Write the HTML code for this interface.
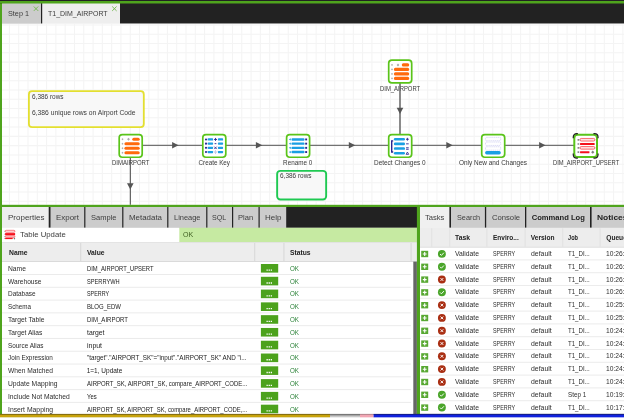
<!DOCTYPE html>
<html lang="en">
<head>
<meta charset="utf-8">
<title>T1_DIM_AIRPORT</title>
<style>
html,body{margin:0;padding:0;background:#fff}
#app{position:relative;width:624px;height:418px;overflow:hidden;background:#fff;font-family:"Liberation Sans",sans-serif}
#app svg,#app .tl{position:absolute;left:0;top:0;display:block}
#app .tl{width:624px;height:418px;will-change:transform}
#app span{position:absolute;white-space:pre;line-height:12px;transform-origin:0 50%}
</style>
</head>
<body>
<div id="app">
<svg width="624" height="418" viewBox="0 0 624 418">
<rect x="0.00" y="0.00" width="624.00" height="418.00" fill="#ffffff"/>
<rect x="0.00" y="0.00" width="624.00" height="23.70" fill="#222222"/>
<rect x="2.00" y="3.00" width="39.00" height="21.20" fill="#cccccc"/>
<rect x="42.20" y="3.00" width="77.80" height="21.20" fill="#eeeeee"/>
<rect x="0.00" y="23.70" width="624.00" height="2.00" fill="#ffffff"/>
<rect x="0.00" y="1.00" width="624.00" height="2.50" fill="#4fa41d"/>
<rect x="0.00" y="0.00" width="624.00" height="1.00" fill="#222222"/>
<path d="M33.8 6.5l4.4 4.4M38.2 6.5l-4.4 4.4" stroke="#6fb74a" stroke-width="0.9" fill="none"/>
<path d="M112.2 6.5l4.4 4.4M116.6 6.5l-4.4 4.4" stroke="#6fb74a" stroke-width="0.9" fill="none"/>
<path d="M9.40 24V204.8M18.70 24V204.8M27.99 24V204.8M37.29 24V204.8M46.58 24V204.8M55.88 24V204.8M65.17 24V204.8M74.47 24V204.8M83.76 24V204.8M93.06 24V204.8M102.35 24V204.8M111.65 24V204.8M120.94 24V204.8M130.24 24V204.8M139.53 24V204.8M148.82 24V204.8M158.12 24V204.8M167.41 24V204.8M176.71 24V204.8M186.00 24V204.8M195.30 24V204.8M204.59 24V204.8M213.89 24V204.8M223.18 24V204.8M232.48 24V204.8M241.77 24V204.8M251.07 24V204.8M260.36 24V204.8M269.66 24V204.8M278.95 24V204.8M288.25 24V204.8M297.54 24V204.8M306.84 24V204.8M316.13 24V204.8M325.43 24V204.8M334.72 24V204.8M344.02 24V204.8M353.31 24V204.8M362.61 24V204.8M371.91 24V204.8M381.20 24V204.8M390.50 24V204.8M399.79 24V204.8M409.09 24V204.8M418.38 24V204.8M427.68 24V204.8M436.97 24V204.8M446.27 24V204.8M455.56 24V204.8M464.86 24V204.8M474.15 24V204.8M483.45 24V204.8M492.74 24V204.8M502.04 24V204.8M511.33 24V204.8M520.63 24V204.8M529.92 24V204.8M539.22 24V204.8M548.51 24V204.8M557.81 24V204.8M567.10 24V204.8M576.39 24V204.8M585.69 24V204.8M594.98 24V204.8M604.28 24V204.8M613.57 24V204.8M622.87 24V204.8M2 25.00H624M2 34.28H624M2 43.56H624M2 52.84H624M2 62.12H624M2 71.40H624M2 80.68H624M2 89.96H624M2 99.24H624M2 108.52H624M2 117.80H624M2 127.08H624M2 136.36H624M2 145.64H624M2 154.92H624M2 164.20H624M2 173.48H624M2 182.76H624M2 192.04H624M2 201.32H624" stroke="#f4f4f4" stroke-width="1.05" fill="none"/>
<rect x="28.9" y="91.2" width="114.9" height="35.9" rx="3.2" fill="#f8f8f8" stroke="#e3df30" stroke-width="1.8"/>
<rect x="277.15" y="170.85" width="49.0" height="28.7" rx="3.2" fill="#f8f8f8" stroke="#1fc952" stroke-width="1.9"/>
<path d="M143 145.30H574" stroke="#484848" stroke-width="0.95" fill="none"/>
<path d="M172.1 142.00L178.5 145.30L172.1 148.60Z" fill="#555555"/>
<path d="M255.9 142.00L262.3 145.30L255.9 148.60Z" fill="#555555"/>
<path d="M348.8 142.00L355.2 145.30L348.8 148.60Z" fill="#555555"/>
<path d="M446.3 142.00L452.7 145.30L446.3 148.60Z" fill="#555555"/>
<path d="M539.1 142.00L545.5 145.30L539.1 148.60Z" fill="#555555"/>
</svg>
<div class="tl">
<span style="left:7.9px;top:8.00px;font-size:7.6px;color:#3c3c3c;transform:scaleX(0.9559);">Step 1</span>
<span style="left:48.2px;top:8.00px;font-size:7.6px;color:#3c3c3c;transform:scaleX(0.9191);">T1_DIM_AIRPORT</span>
<span style="left:31.6px;top:91.00px;font-size:6.3px;color:#3a3a3a;transform:scaleX(1.0256);">6,386 rows</span>
<span style="left:31.6px;top:107.00px;font-size:6.3px;color:#3a3a3a;transform:scaleX(1.0684);">6,386 unique rows on Airport Code</span>
<span style="left:279.8px;top:170.00px;font-size:6.3px;color:#3a3a3a;transform:scaleX(1.0256);">6,386 rows</span>
<span style="left:111.9px;top:157.00px;font-size:6.3px;color:#3a3a3a;transform:scaleX(0.9512);">DIMAIRPORT</span>
<span style="left:198.5px;top:157.00px;font-size:6.3px;color:#3a3a3a;">Create Key</span>
<span style="left:283.1px;top:157.00px;font-size:6.3px;color:#3a3a3a;">Rename 0</span>
<span style="left:374.0px;top:157.00px;font-size:6.3px;color:#3a3a3a;transform:scaleX(1.0237);">Detect Changes 0</span>
<span style="left:458.5px;top:157.00px;font-size:6.3px;color:#3a3a3a;transform:scaleX(1.0223);">Only New and Changes</span>
<span style="left:552.5px;top:157.00px;font-size:6.3px;color:#3a3a3a;transform:scaleX(0.9212);">DIM_AIRPORT_UPSERT</span>
<span style="left:379.8px;top:83.00px;font-size:6.3px;color:#3a3a3a;transform:scaleX(0.9366);">DIM_AIRPORT</span>
</div>
<svg width="624" height="418" viewBox="0 0 624 418">
<path d="M400 83V134" stroke="#666" stroke-width="1.5" fill="none"/><path d="M130.3 157V204.80" stroke="#444" stroke-width="1" fill="none"/>
<path d="M396.7 107.80L403.3 107.80L400.0 114.00Z" fill="#555555"/>
<path d="M127.0 183.30L133.6 183.30L130.3 189.50Z" fill="#555555"/>
<g transform="translate(118.50 133.85)"><rect x="0.7" y="0.7" width="23.0" height="22.7" rx="3.2" fill="#fff" stroke="#5ac41a" stroke-width="1.7"/><rect x="13.8" y="3.8" width="7.4" height="3.2" rx="1.5" fill="#ff6a0d"/><rect x="5.9" y="8.3" width="15.3" height="3.2" rx="1.5" fill="#ff6a0d"/><rect x="5.9" y="12.8" width="15.3" height="3.2" rx="1.5" fill="#ff6a0d"/><rect x="5.9" y="17.3" width="15.3" height="3.2" rx="1.5" fill="#ff6a0d"/><path d="M3.10 5.40h1.80M4.00 4.50v1.80" stroke="#999" stroke-width="0.6" fill="none"/><path d="M3.10 9.90h1.80M4.00 9.00v1.80" stroke="#999" stroke-width="0.6" fill="none"/><path d="M3.10 14.40h1.80M4.00 13.50v1.80" stroke="#999" stroke-width="0.6" fill="none"/><path d="M3.10 18.90h1.80M4.00 18.00v1.80" stroke="#999" stroke-width="0.6" fill="none"/><path d="M10 3.9l1.4 1.5l-1.4 1.5l-1.4 -1.5z" fill="#aaa"/></g>
<g transform="translate(202.10 133.85)"><rect x="0.7" y="0.7" width="23.0" height="22.7" rx="3.2" fill="#fff" stroke="#5ac41a" stroke-width="1.7"/><circle cx="3.9" cy="5.6" r="1.05" fill="#2b2391"/><rect x="5.5" y="4.449999999999999" width="5.5" height="2.3" rx="0.7" fill="#1a9fe3"/><rect x="15.8" y="4.449999999999999" width="5.2" height="2.3" rx="0.7" fill="#1a9fe3"/><circle cx="3.9" cy="9.8" r="1.05" fill="#2b2391"/><rect x="5.5" y="8.65" width="5.5" height="2.3" rx="0.7" fill="#1a9fe3"/><rect x="15.8" y="8.65" width="5.2" height="2.3" rx="0.7" fill="#1a9fe3"/><circle cx="3.9" cy="14.0" r="1.05" fill="#2b2391"/><rect x="5.5" y="12.85" width="5.5" height="2.3" rx="0.7" fill="#1a9fe3"/><rect x="15.8" y="12.85" width="5.2" height="2.3" rx="0.7" fill="#1a9fe3"/><circle cx="3.9" cy="18.2" r="1.05" fill="#2b2391"/><rect x="5.5" y="17.05" width="5.5" height="2.3" rx="0.7" fill="#1a9fe3"/><rect x="15.8" y="17.05" width="5.2" height="2.3" rx="0.7" fill="#1a9fe3"/><path d="M11.9 5.6h3M13.4 4.1v3 M12.5 9.8h1.8 M12.2 12.8l2.4 2.4M14.6 12.8l-2.4 2.4" stroke="#2b2391" stroke-width="0.9" fill="none"/><path d="M12.2 18.2h2.4M13.4 16.7v0.6M13.4 19.1v0.6" stroke="#8a86c8" stroke-width="0.8" fill="none"/></g>
<g transform="translate(285.90 133.85)"><rect x="0.7" y="0.7" width="23.0" height="22.7" rx="3.2" fill="#fff" stroke="#5ac41a" stroke-width="1.7"/><path d="M2.9 5.6l2 -1.1v2.2z" fill="#1a9fe3"/><rect x="5.6" y="4.3999999999999995" width="13" height="2.4" rx="0.9" fill="#1a9fe3"/><rect x="19.3" y="4.6499999999999995" width="1.9" height="1.9" fill="#2b2391"/><path d="M2.9 9.8l2 -1.1v2.2z" fill="#1a9fe3"/><rect x="5.6" y="8.600000000000001" width="13" height="2.4" rx="0.9" fill="#1a9fe3"/><rect x="19.3" y="8.850000000000001" width="1.9" height="1.9" fill="#2b2391"/><path d="M2.9 14.0l2 -1.1v2.2z" fill="#1a9fe3"/><rect x="5.6" y="12.8" width="13" height="2.4" rx="0.9" fill="#1a9fe3"/><rect x="19.3" y="13.05" width="1.9" height="1.9" fill="#2b2391"/><path d="M2.9 18.2l2 -1.1v2.2z" fill="#1a9fe3"/><rect x="5.6" y="17.0" width="13" height="2.4" rx="0.9" fill="#1a9fe3"/><rect x="19.3" y="17.25" width="1.9" height="1.9" fill="#2b2391"/></g>
<g transform="translate(388.00 133.85)"><rect x="0.7" y="0.7" width="23.0" height="22.7" rx="3.2" fill="#fff" stroke="#5ac41a" stroke-width="1.7"/><rect x="5.9" y="4.1000000000000005" width="11.1" height="2.6" rx="1.2" fill="#1a9fe3"/><rect x="5.9" y="8.7" width="11.1" height="2.6" rx="1.2" fill="#1a9fe3"/><rect x="5.9" y="13.399999999999999" width="11.1" height="2.6" rx="1.2" fill="#1a9fe3"/><rect x="5.9" y="18.099999999999998" width="11.1" height="2.6" rx="1.2" fill="#1a9fe3"/><path d="M5.2 7H3.7V18.2H5.2" stroke="#2b2391" stroke-width="1.4" fill="none"/><path d="M18 5.4h2.8M19.4 4v2.8 M18.1 10h2.6 M18.1 13.9h2.6M18.1 15.4h2.6" stroke="#2b2391" stroke-width="0.9" fill="none"/><path d="M19.4 18.2l1.3 2.3h-2.6z" stroke="#2b2391" stroke-width="0.8" fill="none"/></g>
<g transform="translate(481.00 133.85)"><rect x="0.7" y="0.7" width="23.0" height="22.7" rx="3.2" fill="#fff" stroke="#5ac41a" stroke-width="1.7"/><rect x="4.5" y="3.5" width="15.2" height="3.4" rx="1" fill="#fff" stroke="#c4c4ee" stroke-width="0.6" stroke-dasharray="1.3 0.6"/><rect x="4.5" y="8.2" width="15.2" height="3.4" rx="1" fill="#fff" stroke="#c4c4ee" stroke-width="0.6" stroke-dasharray="1.3 0.6"/><rect x="4.5" y="12.9" width="15.2" height="3.4" rx="1" fill="#fff" stroke="#c4c4ee" stroke-width="0.6" stroke-dasharray="1.3 0.6"/><rect x="4.1" y="17.2" width="15.7" height="3.4" rx="1.6" fill="#1a9fe3"/></g>
<g transform="translate(573.45 133.85)"><rect x="0.85" y="0.85" width="22.7" height="22.4" rx="3.2" fill="#fff" stroke="#5ac41a" stroke-width="2"/><path d="M-0.2 4.3999999999999995V3.4Q-0.2 -0.2 3.4 -0.2H4.3999999999999995 M20.0 -0.2H21.0Q24.6 -0.2 24.6 3.4V4.3999999999999995 M24.6 19.700000000000003V20.7Q24.6 24.3 21.0 24.3H20.0 M4.3999999999999995 24.3H3.4Q-0.2 24.3 -0.2 20.7V19.700000000000003" stroke="#222" stroke-width="1.2" fill="none"/><rect x="6.5" y="4.6" width="15" height="2.6" rx="1.3" fill="#ffe0e0" stroke="#f5101c" stroke-width="0.6"/><rect x="6.6" y="9.1" width="14.6" height="2.1" rx="0.4" fill="#f5101c"/><rect x="6.5" y="12.7" width="15" height="2.6" rx="1.3" fill="#ffe0e0" stroke="#f5101c" stroke-width="0.6"/><rect x="6.6" y="17.3" width="9.4" height="2.1" rx="0.4" fill="#f5101c"/><path d="M4.1 5.1h1.7v1.7h-1.7zM4.1 9.3h1.7v1.7h-1.7zM4.1 13.2h1.7v1.7h-1.7zM4.1 17.5h1.7v1.7h-1.7z" fill="#888"/><path d="M19.3 16.7l1.6 1.6l-1.6 1.6l-1.6 -1.6z" fill="#808080"/></g>
<g transform="translate(388.00 59.50)"><rect x="0.7" y="0.7" width="23.0" height="22.7" rx="3.2" fill="#fff" stroke="#5ac41a" stroke-width="1.7"/><rect x="13.8" y="3.8" width="7.4" height="3.2" rx="1.5" fill="#ff6a0d"/><rect x="5.9" y="8.3" width="15.3" height="3.2" rx="1.5" fill="#ff6a0d"/><rect x="5.9" y="12.8" width="15.3" height="3.2" rx="1.5" fill="#ff6a0d"/><rect x="5.9" y="17.3" width="15.3" height="3.2" rx="1.5" fill="#ff6a0d"/><path d="M3.10 5.40h1.80M4.00 4.50v1.80" stroke="#999" stroke-width="0.6" fill="none"/><path d="M3.10 9.90h1.80M4.00 9.00v1.80" stroke="#999" stroke-width="0.6" fill="none"/><path d="M3.10 14.40h1.80M4.00 13.50v1.80" stroke="#999" stroke-width="0.6" fill="none"/><path d="M3.10 18.90h1.80M4.00 18.00v1.80" stroke="#999" stroke-width="0.6" fill="none"/><path d="M10 3.9l1.4 1.5l-1.4 1.5l-1.4 -1.5z" fill="#aaa"/></g>
<rect x="0.00" y="3.50" width="2.00" height="410.60" fill="#4fa41d"/>
<rect x="2.00" y="206.50" width="622.00" height="21.30" fill="#222222"/>
<rect x="2.00" y="206.50" width="46.70" height="21.80" fill="#eeeeee"/>
<rect x="50.50" y="206.50" width="33.70" height="21.80" fill="#cccccc"/>
<rect x="85.40" y="206.50" width="36.80" height="21.80" fill="#cccccc"/>
<rect x="123.40" y="206.50" width="43.80" height="21.80" fill="#cccccc"/>
<rect x="168.40" y="206.50" width="37.80" height="21.80" fill="#cccccc"/>
<rect x="207.40" y="206.50" width="24.60" height="21.80" fill="#cccccc"/>
<rect x="233.20" y="206.50" width="25.30" height="21.80" fill="#cccccc"/>
<rect x="259.70" y="206.50" width="26.50" height="21.80" fill="#cccccc"/>
<rect x="2.00" y="227.80" width="177.30" height="14.60" fill="#ffffff"/>
<rect x="179.30" y="227.80" width="237.60" height="14.60" fill="#c6eaa2"/>
<g transform="translate(3.8 229.8)"><rect x="1.5" y="0.5" width="9.6" height="2" rx="0.9" fill="#ffe4e4" stroke="#f5101c" stroke-width="0.5"/><rect x="1.3" y="3.3" width="10" height="2.2" fill="#f5101c"/><rect x="1.5" y="6.1" width="9.6" height="1.5" rx="0.7" fill="#ffe4e4" stroke="#f5101c" stroke-width="0.5"/><rect x="1.3" y="8.1" width="7.6" height="1.2" fill="#f5101c"/><path d="M0.2 1.5h0.8M0.2 4.4h0.8M0.2 6.9h0.8M0.2 8.7h0.8" stroke="#999" stroke-width="0.8" fill="none"/><circle cx="10.6" cy="8.8" r="0.8" fill="#777"/></g>
<rect x="2.00" y="242.40" width="414.90" height="19.20" fill="#ededed"/>
<rect x="2.00" y="242.00" width="414.90" height="0.80" fill="#e0e0e0"/>
<rect x="2.00" y="261.10" width="414.90" height="1.00" fill="#d8d8d8"/>
<rect x="80.30" y="242.90" width="0.90" height="18.20" fill="#d4d4d4"/>
<rect x="254.30" y="242.90" width="0.90" height="18.20" fill="#d4d4d4"/>
<rect x="283.50" y="242.90" width="0.90" height="18.20" fill="#d4d4d4"/>
<rect x="410.60" y="242.90" width="0.90" height="18.20" fill="#d4d4d4"/>
<rect x="2.00" y="262.10" width="411.40" height="152.00" fill="#ffffff"/>
<rect x="413.30" y="261.60" width="3.60" height="152.50" fill="#666666"/>
<rect x="260.90" y="264.00" width="17.30" height="8.60" fill="#4ca21c"/>
<path d="M266.5 270.20h1.3M268.6 270.20h1.3M270.7 270.20h1.3" stroke="#fff" stroke-width="1.3" fill="none"/>
<rect x="2.00" y="274.00" width="409.00" height="1.00" fill="#ebebeb"/>
<rect x="260.90" y="276.79" width="17.30" height="8.60" fill="#4ca21c"/>
<path d="M266.5 282.99h1.3M268.6 282.99h1.3M270.7 282.99h1.3" stroke="#fff" stroke-width="1.3" fill="none"/>
<rect x="2.00" y="286.79" width="409.00" height="1.00" fill="#ebebeb"/>
<rect x="260.90" y="289.58" width="17.30" height="8.60" fill="#4ca21c"/>
<path d="M266.5 295.78h1.3M268.6 295.78h1.3M270.7 295.78h1.3" stroke="#fff" stroke-width="1.3" fill="none"/>
<rect x="2.00" y="299.58" width="409.00" height="1.00" fill="#ebebeb"/>
<rect x="260.90" y="302.37" width="17.30" height="8.60" fill="#4ca21c"/>
<path d="M266.5 308.57h1.3M268.6 308.57h1.3M270.7 308.57h1.3" stroke="#fff" stroke-width="1.3" fill="none"/>
<rect x="2.00" y="312.37" width="409.00" height="1.00" fill="#ebebeb"/>
<rect x="260.90" y="315.16" width="17.30" height="8.60" fill="#4ca21c"/>
<path d="M266.5 321.36h1.3M268.6 321.36h1.3M270.7 321.36h1.3" stroke="#fff" stroke-width="1.3" fill="none"/>
<rect x="2.00" y="325.16" width="409.00" height="1.00" fill="#ebebeb"/>
<rect x="260.90" y="327.95" width="17.30" height="8.60" fill="#4ca21c"/>
<path d="M266.5 334.15h1.3M268.6 334.15h1.3M270.7 334.15h1.3" stroke="#fff" stroke-width="1.3" fill="none"/>
<rect x="2.00" y="337.95" width="409.00" height="1.00" fill="#ebebeb"/>
<rect x="260.90" y="340.74" width="17.30" height="8.60" fill="#4ca21c"/>
<path d="M266.5 346.94h1.3M268.6 346.94h1.3M270.7 346.94h1.3" stroke="#fff" stroke-width="1.3" fill="none"/>
<rect x="2.00" y="350.74" width="409.00" height="1.00" fill="#ebebeb"/>
<rect x="260.90" y="353.53" width="17.30" height="8.60" fill="#4ca21c"/>
<path d="M266.5 359.73h1.3M268.6 359.73h1.3M270.7 359.73h1.3" stroke="#fff" stroke-width="1.3" fill="none"/>
<rect x="2.00" y="363.53" width="409.00" height="1.00" fill="#ebebeb"/>
<rect x="260.90" y="366.32" width="17.30" height="8.60" fill="#4ca21c"/>
<path d="M266.5 372.52h1.3M268.6 372.52h1.3M270.7 372.52h1.3" stroke="#fff" stroke-width="1.3" fill="none"/>
<rect x="2.00" y="376.32" width="409.00" height="1.00" fill="#ebebeb"/>
<rect x="260.90" y="379.11" width="17.30" height="8.60" fill="#4ca21c"/>
<path d="M266.5 385.31h1.3M268.6 385.31h1.3M270.7 385.31h1.3" stroke="#fff" stroke-width="1.3" fill="none"/>
<rect x="2.00" y="389.11" width="409.00" height="1.00" fill="#ebebeb"/>
<rect x="260.90" y="391.90" width="17.30" height="8.60" fill="#4ca21c"/>
<path d="M266.5 398.10h1.3M268.6 398.10h1.3M270.7 398.10h1.3" stroke="#fff" stroke-width="1.3" fill="none"/>
<rect x="2.00" y="401.90" width="409.00" height="1.00" fill="#ebebeb"/>
<rect x="260.90" y="404.69" width="17.30" height="8.60" fill="#4ca21c"/>
<path d="M266.5 410.89h1.3M268.6 410.89h1.3M270.7 410.89h1.3" stroke="#fff" stroke-width="1.3" fill="none"/>
<rect x="416.90" y="206.70" width="3.10" height="207.40" fill="#4fa41d"/>
<rect x="420.00" y="206.50" width="29.40" height="21.80" fill="#f0f0f0"/>
<rect x="451.00" y="206.50" width="33.90" height="21.80" fill="#cccccc"/>
<rect x="486.20" y="206.50" width="38.80" height="21.80" fill="#cccccc"/>
<rect x="526.30" y="206.50" width="63.70" height="21.80" fill="#cccccc"/>
<rect x="591.60" y="206.50" width="32.40" height="21.80" fill="#cccccc"/>
<rect x="420.00" y="227.80" width="204.00" height="19.50" fill="#ededed"/>
<rect x="420.00" y="246.80" width="204.00" height="1.00" fill="#dcdcdc"/>
<rect x="431.40" y="228.30" width="0.80" height="18.50" fill="#dedede"/>
<rect x="449.40" y="228.30" width="0.80" height="18.50" fill="#dedede"/>
<rect x="486.50" y="228.30" width="0.80" height="18.50" fill="#dedede"/>
<rect x="524.70" y="228.30" width="0.80" height="18.50" fill="#dedede"/>
<rect x="562.40" y="228.30" width="0.80" height="18.50" fill="#dedede"/>
<rect x="599.70" y="228.30" width="0.80" height="18.50" fill="#dedede"/>
<rect x="420.00" y="247.80" width="204.00" height="166.30" fill="#ffffff"/>
<rect x="420.00" y="259.40" width="204.00" height="1.00" fill="#ececec"/>
<g transform="translate(421.2 250.80)"><rect width="7" height="6.4" fill="#58a832"/><path d="M1.6 3.2h3.8M3.5 1.2v4" stroke="#fff" stroke-width="1.1" fill="none"/></g>
<g transform="translate(437.7 249.70)"><circle cx="4.2" cy="4.2" r="3.95" fill="#4aa52a"/><path d="M2.3 4.3l1.4 1.4l2.5 -2.7" stroke="#fff" stroke-width="0.95" fill="none"/></g>
<rect x="420.00" y="272.20" width="204.00" height="1.00" fill="#ececec"/>
<g transform="translate(421.2 263.60)"><rect width="7" height="6.4" fill="#58a832"/><path d="M1.6 3.2h3.8M3.5 1.2v4" stroke="#fff" stroke-width="1.1" fill="none"/></g>
<g transform="translate(437.7 262.50)"><circle cx="4.2" cy="4.2" r="3.95" fill="#4aa52a"/><path d="M2.3 4.3l1.4 1.4l2.5 -2.7" stroke="#fff" stroke-width="0.95" fill="none"/></g>
<rect x="420.00" y="285.00" width="204.00" height="1.00" fill="#ececec"/>
<g transform="translate(421.2 276.40)"><rect width="7" height="6.4" fill="#58a832"/><path d="M1.6 3.2h3.8M3.5 1.2v4" stroke="#fff" stroke-width="1.1" fill="none"/></g>
<g transform="translate(437.7 275.30)"><circle cx="4.2" cy="4.2" r="3.95" fill="#a92e12"/><path d="M2.8 2.8l2.8 2.8M5.6 2.8l-2.8 2.8" stroke="#fff" stroke-width="0.95" fill="none"/></g>
<rect x="420.00" y="297.80" width="204.00" height="1.00" fill="#ececec"/>
<g transform="translate(421.2 289.20)"><rect width="7" height="6.4" fill="#58a832"/><path d="M1.6 3.2h3.8M3.5 1.2v4" stroke="#fff" stroke-width="1.1" fill="none"/></g>
<g transform="translate(437.7 288.10)"><circle cx="4.2" cy="4.2" r="3.95" fill="#4aa52a"/><path d="M2.3 4.3l1.4 1.4l2.5 -2.7" stroke="#fff" stroke-width="0.95" fill="none"/></g>
<rect x="420.00" y="310.60" width="204.00" height="1.00" fill="#ececec"/>
<g transform="translate(421.2 302.00)"><rect width="7" height="6.4" fill="#58a832"/><path d="M1.6 3.2h3.8M3.5 1.2v4" stroke="#fff" stroke-width="1.1" fill="none"/></g>
<g transform="translate(437.7 300.90)"><circle cx="4.2" cy="4.2" r="3.95" fill="#a92e12"/><path d="M2.8 2.8l2.8 2.8M5.6 2.8l-2.8 2.8" stroke="#fff" stroke-width="0.95" fill="none"/></g>
<rect x="420.00" y="323.40" width="204.00" height="1.00" fill="#ececec"/>
<g transform="translate(421.2 314.80)"><rect width="7" height="6.4" fill="#58a832"/><path d="M1.6 3.2h3.8M3.5 1.2v4" stroke="#fff" stroke-width="1.1" fill="none"/></g>
<g transform="translate(437.7 313.70)"><circle cx="4.2" cy="4.2" r="3.95" fill="#a92e12"/><path d="M2.8 2.8l2.8 2.8M5.6 2.8l-2.8 2.8" stroke="#fff" stroke-width="0.95" fill="none"/></g>
<rect x="420.00" y="336.20" width="204.00" height="1.00" fill="#ececec"/>
<g transform="translate(421.2 327.60)"><rect width="7" height="6.4" fill="#58a832"/><path d="M1.6 3.2h3.8M3.5 1.2v4" stroke="#fff" stroke-width="1.1" fill="none"/></g>
<g transform="translate(437.7 326.50)"><circle cx="4.2" cy="4.2" r="3.95" fill="#a92e12"/><path d="M2.8 2.8l2.8 2.8M5.6 2.8l-2.8 2.8" stroke="#fff" stroke-width="0.95" fill="none"/></g>
<rect x="420.00" y="349.00" width="204.00" height="1.00" fill="#ececec"/>
<g transform="translate(421.2 340.40)"><rect width="7" height="6.4" fill="#58a832"/><path d="M1.6 3.2h3.8M3.5 1.2v4" stroke="#fff" stroke-width="1.1" fill="none"/></g>
<g transform="translate(437.7 339.30)"><circle cx="4.2" cy="4.2" r="3.95" fill="#a92e12"/><path d="M2.8 2.8l2.8 2.8M5.6 2.8l-2.8 2.8" stroke="#fff" stroke-width="0.95" fill="none"/></g>
<rect x="420.00" y="361.80" width="204.00" height="1.00" fill="#ececec"/>
<g transform="translate(421.2 353.20)"><rect width="7" height="6.4" fill="#58a832"/><path d="M1.6 3.2h3.8M3.5 1.2v4" stroke="#fff" stroke-width="1.1" fill="none"/></g>
<g transform="translate(437.7 352.10)"><circle cx="4.2" cy="4.2" r="3.95" fill="#a92e12"/><path d="M2.8 2.8l2.8 2.8M5.6 2.8l-2.8 2.8" stroke="#fff" stroke-width="0.95" fill="none"/></g>
<rect x="420.00" y="374.60" width="204.00" height="1.00" fill="#ececec"/>
<g transform="translate(421.2 366.00)"><rect width="7" height="6.4" fill="#58a832"/><path d="M1.6 3.2h3.8M3.5 1.2v4" stroke="#fff" stroke-width="1.1" fill="none"/></g>
<g transform="translate(437.7 364.90)"><circle cx="4.2" cy="4.2" r="3.95" fill="#a92e12"/><path d="M2.8 2.8l2.8 2.8M5.6 2.8l-2.8 2.8" stroke="#fff" stroke-width="0.95" fill="none"/></g>
<rect x="420.00" y="387.40" width="204.00" height="1.00" fill="#ececec"/>
<g transform="translate(421.2 378.80)"><rect width="7" height="6.4" fill="#58a832"/><path d="M1.6 3.2h3.8M3.5 1.2v4" stroke="#fff" stroke-width="1.1" fill="none"/></g>
<g transform="translate(437.7 377.70)"><circle cx="4.2" cy="4.2" r="3.95" fill="#a92e12"/><path d="M2.8 2.8l2.8 2.8M5.6 2.8l-2.8 2.8" stroke="#fff" stroke-width="0.95" fill="none"/></g>
<rect x="420.00" y="400.20" width="204.00" height="1.00" fill="#ececec"/>
<g transform="translate(421.2 391.60)"><rect width="7" height="6.4" fill="#58a832"/><path d="M1.6 3.2h3.8M3.5 1.2v4" stroke="#fff" stroke-width="1.1" fill="none"/></g>
<g transform="translate(437.7 390.50)"><circle cx="4.2" cy="4.2" r="3.95" fill="#4aa52a"/><path d="M2.3 4.3l1.4 1.4l2.5 -2.7" stroke="#fff" stroke-width="0.95" fill="none"/></g>
<rect x="420.00" y="413.00" width="204.00" height="1.00" fill="#ececec"/>
<g transform="translate(421.2 404.40)"><rect width="7" height="6.4" fill="#58a832"/><path d="M1.6 3.2h3.8M3.5 1.2v4" stroke="#fff" stroke-width="1.1" fill="none"/></g>
<g transform="translate(437.7 403.30)"><circle cx="4.2" cy="4.2" r="3.95" fill="#4aa52a"/><path d="M2.3 4.3l1.4 1.4l2.5 -2.7" stroke="#fff" stroke-width="0.95" fill="none"/></g>
<rect x="0.00" y="204.80" width="624.00" height="2.20" fill="#4fa41d"/>
<rect x="0.00" y="414.10" width="624.00" height="3.90" fill="#ffffff"/>
<rect x="0.00" y="414.10" width="330.00" height="3.20" fill="#c8a30c"/>
<rect x="0.00" y="413.90" width="330.00" height="0.80" fill="#6a560a"/>
<rect x="330.00" y="414.10" width="30.00" height="3.20" fill="#c8c8c8"/>
<rect x="330.00" y="413.90" width="30.00" height="1.50" fill="#777777"/>
<rect x="360.00" y="414.10" width="13.60" height="3.20" fill="#f2a6b4"/>
<rect x="360.00" y="413.90" width="13.60" height="0.80" fill="#a47a80"/>
<rect x="373.60" y="414.10" width="250.40" height="3.20" fill="#1122dd"/>
<rect x="373.60" y="413.90" width="250.40" height="0.80" fill="#0c1470"/>
<rect x="0.00" y="417.30" width="330.00" height="0.70" fill="#e9dfae"/>
<rect x="330.00" y="417.30" width="30.00" height="0.70" fill="#ececec"/>
<rect x="360.00" y="417.30" width="13.60" height="0.70" fill="#fadde2"/>
<rect x="373.60" y="417.30" width="250.40" height="0.70" fill="#a8aef2"/>
</svg>
<div class="tl">
<span style="left:7.9px;top:212.00px;font-size:7.6px;color:#3c3c3c;transform:scaleX(1.0542);">Properties</span>
<span style="left:55.8px;top:212.00px;font-size:7.6px;color:#3c3c3c;transform:scaleX(1.0431);">Export</span>
<span style="left:90.8px;top:212.00px;font-size:7.6px;color:#3c3c3c;transform:scaleX(0.9903);">Sample</span>
<span style="left:128.7px;top:212.00px;font-size:7.6px;color:#3c3c3c;transform:scaleX(1.0419);">Metadata</span>
<span style="left:173.8px;top:212.00px;font-size:7.6px;color:#3c3c3c;transform:scaleX(0.9803);">Lineage</span>
<span style="left:212.0px;top:212.00px;font-size:7.6px;color:#3c3c3c;transform:scaleX(0.9340);">SQL</span>
<span style="left:237.9px;top:212.00px;font-size:7.6px;color:#3c3c3c;transform:scaleX(0.9932);">Plan</span>
<span style="left:264.8px;top:212.00px;font-size:7.6px;color:#3c3c3c;transform:scaleX(1.0496);">Help</span>
<span style="left:20.3px;top:229.00px;font-size:7.6px;color:#3c3c3c;transform:scaleX(1.0212);">Table Update</span>
<span style="left:182.8px;top:229.00px;font-size:7.6px;color:#3f5f22;transform:scaleX(0.9286);">OK</span>
<span style="left:8.5px;top:247.00px;font-size:6.6px;color:#222222;font-weight:700;transform:scaleX(1.0296);">Name</span>
<span style="left:86.6px;top:247.00px;font-size:6.6px;color:#222222;font-weight:700;transform:scaleX(1.0212);">Value</span>
<span style="left:289.6px;top:247.00px;font-size:6.6px;color:#222222;font-weight:700;transform:scaleX(1.0220);">Status</span>
<span style="left:8.4px;top:263.00px;font-size:6.5px;color:#2c2c2c;transform:scaleX(1.0321);">Name</span>
<span style="left:86.7px;top:263.00px;font-size:6.5px;color:#222222;transform:scaleX(0.8966);">DIM_AIRPORT_UPSERT</span>
<span style="left:289.8px;top:263.00px;font-size:6.5px;color:#2b8238;transform:scaleX(0.9568);">OK</span>
<span style="left:8.4px;top:276.00px;font-size:6.5px;color:#2c2c2c;transform:scaleX(1.0152);">Warehouse</span>
<span style="left:86.7px;top:276.00px;font-size:6.5px;color:#222222;transform:scaleX(0.8731);">SPERRYWH</span>
<span style="left:289.8px;top:276.00px;font-size:6.5px;color:#2b8238;transform:scaleX(0.9568);">OK</span>
<span style="left:8.4px;top:288.00px;font-size:6.5px;color:#2c2c2c;transform:scaleX(0.9918);">Database</span>
<span style="left:86.7px;top:288.00px;font-size:6.5px;color:#222222;transform:scaleX(0.8300);">SPERRY</span>
<span style="left:289.8px;top:288.00px;font-size:6.5px;color:#2b8238;transform:scaleX(0.9568);">OK</span>
<span style="left:8.4px;top:301.00px;font-size:6.5px;color:#2c2c2c;transform:scaleX(0.9682);">Schema</span>
<span style="left:86.7px;top:301.00px;font-size:6.5px;color:#222222;transform:scaleX(0.9228);">BLOG_EDW</span>
<span style="left:289.8px;top:301.00px;font-size:6.5px;color:#2b8238;transform:scaleX(0.9568);">OK</span>
<span style="left:8.4px;top:314.00px;font-size:6.5px;color:#2c2c2c;transform:scaleX(1.0341);">Target Table</span>
<span style="left:86.7px;top:314.00px;font-size:6.5px;color:#222222;transform:scaleX(0.9252);">DIM_AIRPORT</span>
<span style="left:289.8px;top:314.00px;font-size:6.5px;color:#2b8238;transform:scaleX(0.9568);">OK</span>
<span style="left:8.4px;top:327.00px;font-size:6.5px;color:#2c2c2c;transform:scaleX(1.0205);">Target Alias</span>
<span style="left:86.7px;top:327.00px;font-size:6.5px;color:#222222;transform:scaleX(1.0526);">target</span>
<span style="left:289.8px;top:327.00px;font-size:6.5px;color:#2b8238;transform:scaleX(0.9568);">OK</span>
<span style="left:8.4px;top:340.00px;font-size:6.5px;color:#2c2c2c;transform:scaleX(0.9823);">Source Alias</span>
<span style="left:86.7px;top:340.00px;font-size:6.5px;color:#222222;transform:scaleX(1.0631);">input</span>
<span style="left:289.8px;top:340.00px;font-size:6.5px;color:#2b8238;transform:scaleX(0.9568);">OK</span>
<span style="left:8.4px;top:352.00px;font-size:6.5px;color:#2c2c2c;transform:scaleX(0.9784);">Join Expression</span>
<span style="left:86.7px;top:352.00px;font-size:6.5px;color:#222222;transform:scaleX(0.9675);">"target"."AIRPORT_SK"="input"."AIRPORT_SK" AND "i...</span>
<span style="left:289.8px;top:352.00px;font-size:6.5px;color:#2b8238;transform:scaleX(0.9568);">OK</span>
<span style="left:8.4px;top:365.00px;font-size:6.5px;color:#2c2c2c;transform:scaleX(1.0270);">When Matched</span>
<span style="left:86.7px;top:365.00px;font-size:6.5px;color:#222222;">1=1, Update</span>
<span style="left:289.8px;top:365.00px;font-size:6.5px;color:#2b8238;transform:scaleX(0.9568);">OK</span>
<span style="left:8.4px;top:378.00px;font-size:6.5px;color:#2c2c2c;transform:scaleX(1.0356);">Update Mapping</span>
<span style="left:86.7px;top:378.00px;font-size:6.5px;color:#222222;transform:scaleX(0.9187);">AIRPORT_SK, AIRPORT_SK, compare_AIRPORT_CODE...</span>
<span style="left:289.8px;top:378.00px;font-size:6.5px;color:#2b8238;transform:scaleX(0.9568);">OK</span>
<span style="left:8.4px;top:391.00px;font-size:6.5px;color:#2c2c2c;transform:scaleX(1.0348);">Include Not Matched</span>
<span style="left:86.7px;top:391.00px;font-size:6.5px;color:#222222;transform:scaleX(0.9143);">Yes</span>
<span style="left:289.8px;top:391.00px;font-size:6.5px;color:#2b8238;transform:scaleX(0.9568);">OK</span>
<span style="left:8.4px;top:404.00px;font-size:6.5px;color:#2c2c2c;transform:scaleX(1.0465);">Insert Mapping</span>
<span style="left:86.7px;top:404.00px;font-size:6.5px;color:#222222;transform:scaleX(0.9093);">AIRPORT_SK, AIRPORT_SK, compare_AIRPORT_CODE,...</span>
<span style="left:289.8px;top:404.00px;font-size:6.5px;color:#2b8238;transform:scaleX(0.9568);">OK</span>
<span style="left:425.0px;top:212.00px;font-size:7.6px;color:#3c3c3c;">Tasks</span>
<span style="left:456.5px;top:212.00px;font-size:7.6px;color:#3c3c3c;transform:scaleX(0.9600);">Search</span>
<span style="left:491.7px;top:212.00px;font-size:7.6px;color:#3c3c3c;transform:scaleX(1.0081);">Console</span>
<span style="left:531.7px;top:212.00px;font-size:7.6px;color:#222;font-weight:700;">Command Log</span>
<span style="left:597.0px;top:212.00px;font-size:7.6px;color:#222;font-weight:700;transform:scaleX(1.1116);">Notices</span>
<span style="left:455.0px;top:232.00px;font-size:6.6px;color:#222222;font-weight:700;transform:scaleX(1.0311);">Task</span>
<span style="left:492.8px;top:232.00px;font-size:6.6px;color:#222222;font-weight:700;transform:scaleX(0.9879);">Enviro...</span>
<span style="left:530.7px;top:232.00px;font-size:6.6px;color:#222222;font-weight:700;">Version</span>
<span style="left:568.3px;top:232.00px;font-size:6.6px;color:#222222;font-weight:700;transform:scaleX(0.8522);">Job</span>
<span style="left:606.3px;top:232.00px;font-size:6.6px;color:#222222;font-weight:700;">Queued</span>
<span style="left:455.0px;top:248.00px;font-size:6.5px;color:#2c2c2c;transform:scaleX(1.0428);">Validate</span>
<span style="left:492.8px;top:248.00px;font-size:6.5px;color:#2c2c2c;transform:scaleX(0.8338);">SPERRY</span>
<span style="left:530.8px;top:248.00px;font-size:6.5px;color:#2c2c2c;transform:scaleX(1.0598);">default</span>
<span style="left:568.3px;top:248.00px;font-size:6.5px;color:#2c2c2c;transform:scaleX(0.9384);">T1_DI...</span>
<span style="left:606.3px;top:248.00px;font-size:6.5px;color:#2c2c2c;transform:scaleX(1.0272);">10:26:41</span>
<span style="left:455.0px;top:261.00px;font-size:6.5px;color:#2c2c2c;transform:scaleX(1.0428);">Validate</span>
<span style="left:492.8px;top:261.00px;font-size:6.5px;color:#2c2c2c;transform:scaleX(0.8338);">SPERRY</span>
<span style="left:530.8px;top:261.00px;font-size:6.5px;color:#2c2c2c;transform:scaleX(1.0598);">default</span>
<span style="left:568.3px;top:261.00px;font-size:6.5px;color:#2c2c2c;transform:scaleX(0.9384);">T1_DI...</span>
<span style="left:606.3px;top:261.00px;font-size:6.5px;color:#2c2c2c;transform:scaleX(1.0272);">10:26:22</span>
<span style="left:455.0px;top:274.00px;font-size:6.5px;color:#2c2c2c;transform:scaleX(1.0428);">Validate</span>
<span style="left:492.8px;top:274.00px;font-size:6.5px;color:#2c2c2c;transform:scaleX(0.8338);">SPERRY</span>
<span style="left:530.8px;top:274.00px;font-size:6.5px;color:#2c2c2c;transform:scaleX(1.0598);">default</span>
<span style="left:568.3px;top:274.00px;font-size:6.5px;color:#2c2c2c;transform:scaleX(0.9384);">T1_DI...</span>
<span style="left:606.3px;top:274.00px;font-size:6.5px;color:#2c2c2c;transform:scaleX(1.0272);">10:26:09</span>
<span style="left:455.0px;top:286.00px;font-size:6.5px;color:#2c2c2c;transform:scaleX(1.0428);">Validate</span>
<span style="left:492.8px;top:286.00px;font-size:6.5px;color:#2c2c2c;transform:scaleX(0.8338);">SPERRY</span>
<span style="left:530.8px;top:286.00px;font-size:6.5px;color:#2c2c2c;transform:scaleX(1.0598);">default</span>
<span style="left:568.3px;top:286.00px;font-size:6.5px;color:#2c2c2c;transform:scaleX(0.9384);">T1_DI...</span>
<span style="left:606.3px;top:286.00px;font-size:6.5px;color:#2c2c2c;transform:scaleX(1.0272);">10:26:01</span>
<span style="left:455.0px;top:299.00px;font-size:6.5px;color:#2c2c2c;transform:scaleX(1.0428);">Validate</span>
<span style="left:492.8px;top:299.00px;font-size:6.5px;color:#2c2c2c;transform:scaleX(0.8338);">SPERRY</span>
<span style="left:530.8px;top:299.00px;font-size:6.5px;color:#2c2c2c;transform:scaleX(1.0598);">default</span>
<span style="left:568.3px;top:299.00px;font-size:6.5px;color:#2c2c2c;transform:scaleX(0.9384);">T1_DI...</span>
<span style="left:606.3px;top:299.00px;font-size:6.5px;color:#2c2c2c;transform:scaleX(1.0272);">10:25:37</span>
<span style="left:455.0px;top:312.00px;font-size:6.5px;color:#2c2c2c;transform:scaleX(1.0428);">Validate</span>
<span style="left:492.8px;top:312.00px;font-size:6.5px;color:#2c2c2c;transform:scaleX(0.8338);">SPERRY</span>
<span style="left:530.8px;top:312.00px;font-size:6.5px;color:#2c2c2c;transform:scaleX(1.0598);">default</span>
<span style="left:568.3px;top:312.00px;font-size:6.5px;color:#2c2c2c;transform:scaleX(0.9384);">T1_DI...</span>
<span style="left:606.3px;top:312.00px;font-size:6.5px;color:#2c2c2c;transform:scaleX(1.0272);">10:25:12</span>
<span style="left:455.0px;top:325.00px;font-size:6.5px;color:#2c2c2c;transform:scaleX(1.0428);">Validate</span>
<span style="left:492.8px;top:325.00px;font-size:6.5px;color:#2c2c2c;transform:scaleX(0.8338);">SPERRY</span>
<span style="left:530.8px;top:325.00px;font-size:6.5px;color:#2c2c2c;transform:scaleX(1.0598);">default</span>
<span style="left:568.3px;top:325.00px;font-size:6.5px;color:#2c2c2c;transform:scaleX(0.9384);">T1_DI...</span>
<span style="left:606.3px;top:325.00px;font-size:6.5px;color:#2c2c2c;transform:scaleX(1.0272);">10:24:58</span>
<span style="left:455.0px;top:338.00px;font-size:6.5px;color:#2c2c2c;transform:scaleX(1.0428);">Validate</span>
<span style="left:492.8px;top:338.00px;font-size:6.5px;color:#2c2c2c;transform:scaleX(0.8338);">SPERRY</span>
<span style="left:530.8px;top:338.00px;font-size:6.5px;color:#2c2c2c;transform:scaleX(1.0598);">default</span>
<span style="left:568.3px;top:338.00px;font-size:6.5px;color:#2c2c2c;transform:scaleX(0.9384);">T1_DI...</span>
<span style="left:606.3px;top:338.00px;font-size:6.5px;color:#2c2c2c;transform:scaleX(1.0272);">10:24:44</span>
<span style="left:455.0px;top:350.00px;font-size:6.5px;color:#2c2c2c;transform:scaleX(1.0428);">Validate</span>
<span style="left:492.8px;top:350.00px;font-size:6.5px;color:#2c2c2c;transform:scaleX(0.8338);">SPERRY</span>
<span style="left:530.8px;top:350.00px;font-size:6.5px;color:#2c2c2c;transform:scaleX(1.0598);">default</span>
<span style="left:568.3px;top:350.00px;font-size:6.5px;color:#2c2c2c;transform:scaleX(0.9384);">T1_DI...</span>
<span style="left:606.3px;top:350.00px;font-size:6.5px;color:#2c2c2c;transform:scaleX(1.0272);">10:24:31</span>
<span style="left:455.0px;top:363.00px;font-size:6.5px;color:#2c2c2c;transform:scaleX(1.0428);">Validate</span>
<span style="left:492.8px;top:363.00px;font-size:6.5px;color:#2c2c2c;transform:scaleX(0.8338);">SPERRY</span>
<span style="left:530.8px;top:363.00px;font-size:6.5px;color:#2c2c2c;transform:scaleX(1.0598);">default</span>
<span style="left:568.3px;top:363.00px;font-size:6.5px;color:#2c2c2c;transform:scaleX(0.9384);">T1_DI...</span>
<span style="left:606.3px;top:363.00px;font-size:6.5px;color:#2c2c2c;transform:scaleX(1.0272);">10:24:19</span>
<span style="left:455.0px;top:376.00px;font-size:6.5px;color:#2c2c2c;transform:scaleX(1.0428);">Validate</span>
<span style="left:492.8px;top:376.00px;font-size:6.5px;color:#2c2c2c;transform:scaleX(0.8338);">SPERRY</span>
<span style="left:530.8px;top:376.00px;font-size:6.5px;color:#2c2c2c;transform:scaleX(1.0598);">default</span>
<span style="left:568.3px;top:376.00px;font-size:6.5px;color:#2c2c2c;transform:scaleX(0.9384);">T1_DI...</span>
<span style="left:606.3px;top:376.00px;font-size:6.5px;color:#2c2c2c;transform:scaleX(1.0272);">10:24:05</span>
<span style="left:455.0px;top:389.00px;font-size:6.5px;color:#2c2c2c;transform:scaleX(1.0428);">Validate</span>
<span style="left:492.8px;top:389.00px;font-size:6.5px;color:#2c2c2c;transform:scaleX(0.8338);">SPERRY</span>
<span style="left:530.8px;top:389.00px;font-size:6.5px;color:#2c2c2c;transform:scaleX(1.0598);">default</span>
<span style="left:568.3px;top:389.00px;font-size:6.5px;color:#2c2c2c;transform:scaleX(0.9682);">Step 1</span>
<span style="left:606.3px;top:389.00px;font-size:6.5px;color:#2c2c2c;transform:scaleX(1.0272);">10:19:48</span>
<span style="left:455.0px;top:402.00px;font-size:6.5px;color:#2c2c2c;transform:scaleX(1.0428);">Validate</span>
<span style="left:492.8px;top:402.00px;font-size:6.5px;color:#2c2c2c;transform:scaleX(0.8338);">SPERRY</span>
<span style="left:530.8px;top:402.00px;font-size:6.5px;color:#2c2c2c;transform:scaleX(1.0598);">default</span>
<span style="left:568.3px;top:402.00px;font-size:6.5px;color:#2c2c2c;transform:scaleX(0.9384);">T1_DI...</span>
<span style="left:606.3px;top:402.00px;font-size:6.5px;color:#2c2c2c;transform:scaleX(1.0272);">10:17:26</span>
</div>
</div>
</body>
</html>
